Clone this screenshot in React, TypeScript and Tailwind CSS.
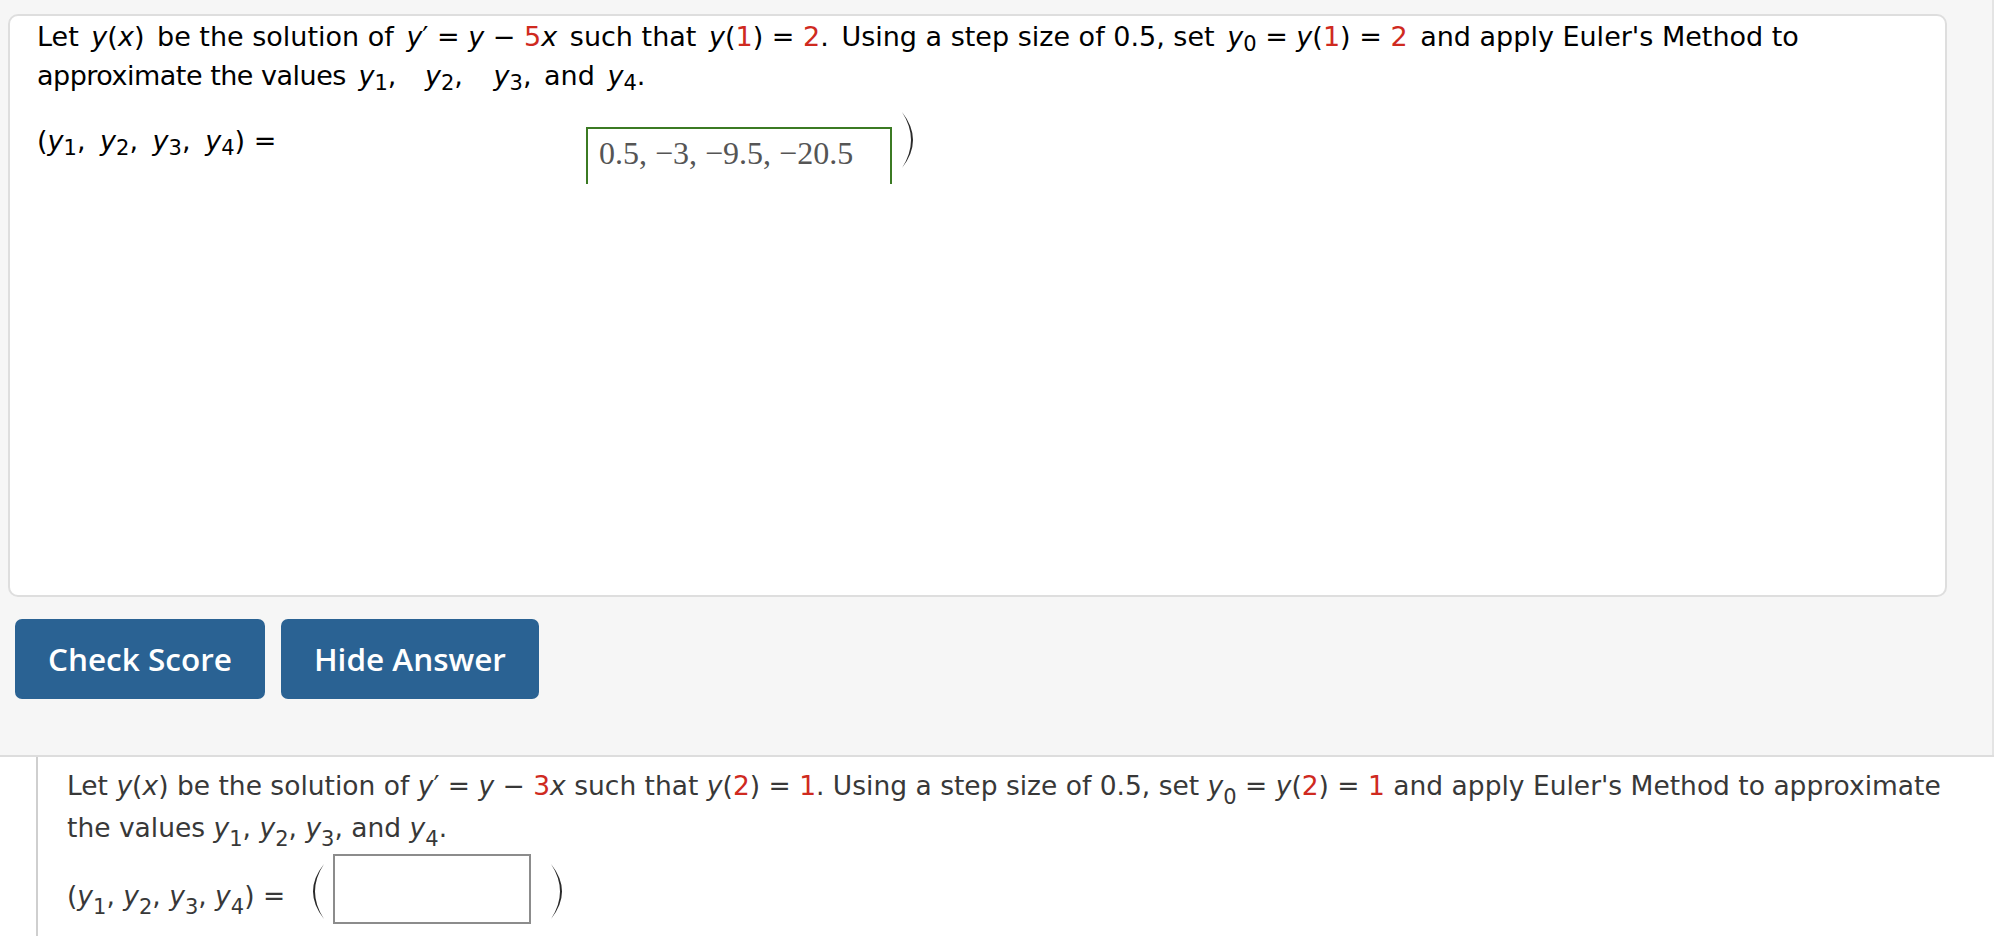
import React from "react";

type C = { children?: React.ReactNode; className?: string };

const R = ({ children }: C) => <span className="text-[#cf2a1f]">{children}</span>;
const I = ({ children }: C) => <i className="italic">{children}</i>;
const M = ({ children, className = "" }: C) => <span className={"mx-[4px] " + className}>{children}</span>;
const S = ({ children }: C) => (
  <span className="text-[21px] leading-none align-[-5px]">{children}</span>
);
const S2 = ({ children }: C) => (
  <span className="text-[21px] leading-none align-[-9px]">{children}</span>
);

const RParen = ({ h = 56 }: { h?: number }) => (
  <svg width="16" height={h} viewBox={`0 0 16 ${h}`} className="block">
    <path d={`M1 0 Q23 ${h / 2} 1 ${h} Q19 ${h / 2} 1 0 Z`} fill="#2a2a2a" />
  </svg>
);
const LParen = ({ h = 56 }: { h?: number }) => (
  <svg width="16" height={h} viewBox={`0 0 16 ${h}`} className="block">
    <path d={`M15 0 Q-7 ${h / 2} 15 ${h} Q-3 ${h / 2} 15 0 Z`} fill="#2a2a2a" />
  </svg>
);

export default function App() {
  return (
    <div className="w-[1994px] h-[936px] overflow-hidden bg-white font-['DejaVu_Sans',Verdana,sans-serif]">
      {/* top gray area */}
      <div className="h-[755px] bg-[#f6f6f6] border-r-2 border-[#e4e4e4] pt-[14px] pl-[8px] flex flex-col">
        <div className="w-[1939px] h-[583px] shrink-0 bg-white border-2 border-[#dedede] rounded-[10px] pl-[27px] pt-[1px] text-black text-[27px] leading-[39px]">
          <div className="whitespace-nowrap">
            Let
            {" "}
            <M>
              <I>y</I>(<I>x</I>)
            </M>
            {" "}be the solution of{" "}
            <M>
              <I>y</I>′ = <I>y</I> − <R>5</R>
              <I>x</I>
            </M>
            {" "}such that{" "}
            <M>
              <I>y</I>(<R>1</R>) = <R>2</R>.
            </M>
            {" "}Using a step size of 0.5, set{" "}
            <M>
              <I>y</I>
              <S>0</S> = <I>y</I>(<R>1</R>) = <R>2</R>
            </M>
            {" "}and apply Euler's Method to
          </div>
          <div className="whitespace-nowrap">
            <span className="tracking-[-0.5px]">approximate the values</span>{" "}
            <M className="mr-[16px]">
              <I>y</I>
              <S>1</S>,
            </M>
            {" "}
            <M className="mr-[18px]">
              <I>y</I>
              <S>2</S>,
            </M>
            {" "}
            <M>
              <I>y</I>
              <S>3</S>,
            </M>
            {" "}and{" "}
            <M>
              <I>y</I>
              <S>4</S>.
            </M>
          </div>
          <div className="flex items-start mt-[17px]">
            <div className="w-[549px] shrink-0 pt-[9px] leading-[39px] whitespace-nowrap">
              <span className="[word-spacing:6px]">
                (<I>y</I>
                <S>1</S>, <I>y</I>
                <S>2</S>, <I>y</I>
                <S>3</S>, <I>y</I>
                <S>4</S>)
              </span>{" "}
              =
            </div>
            <div className="mt-[15px] w-[306px] h-[57px] shrink-0 border-2 border-b-0 border-[#3b7a23] pl-[11px] pt-[7px] text-[32px] leading-[34px] text-[#555555] font-['Liberation_Serif',serif] whitespace-nowrap">
              0.5, −3, −9.5, −20.5
            </div>
            <div className="ml-[9px]">
              <RParen h={56} />
            </div>
          </div>
        </div>
        <div className="flex gap-[16px] mt-[22px] pl-[7px] font-['Open_Sans',sans-serif]">
          <button className="h-[80px] px-[33px] rounded-[7px] bg-[#2a6293] text-white text-[31.5px] font-semibold">
            Check Score
          </button>
          <button className="h-[80px] px-[33px] rounded-[7px] bg-[#2a6293] text-white text-[31.5px] font-semibold">
            Hide Answer
          </button>
        </div>
      </div>

      {/* lower panel */}
      <div className="h-[181px] border-t-2 border-[#dddddd] bg-white flex">
        <div className="w-[36px] shrink-0" />
        <div className="border-l-2 border-[#cfcfcf] pl-[29px] pt-[9px] text-[#383838] text-[26.5px] leading-[39px] flex-1">
          <div className="whitespace-nowrap">
            Let <I>y</I>(<I>x</I>) be the solution of <I>y</I>′ = <I>y</I> − <R>3</R>
            <I>x</I> such that <I>y</I>(<R>2</R>) = <R>1</R>. Using a step size of 0.5, set{" "}
            <I>y</I>
            <S2>0</S2> = <I>y</I>(<R>2</R>) = <R>1</R> and apply Euler's Method to approximate
          </div>
          <div className="whitespace-nowrap">
            the values <I>y</I>
            <S2>1</S2>, <I>y</I>
            <S2>2</S2>, <I>y</I>
            <S2>3</S2>, and <I>y</I>
            <S2>4</S2>.
          </div>
          <div className="flex items-start mt-[4px]">
            <div className="mt-[22px] w-[242px] shrink-0 whitespace-nowrap">
              (<I>y</I>
              <S2>1</S2>, <I>y</I>
              <S2>2</S2>, <I>y</I>
              <S2>3</S2>, <I>y</I>
              <S2>4</S2>) =
            </div>
            <div className="mt-[10px]">
              <LParen h={55} />
            </div>
            <div className="ml-[8px] w-[198px] h-[70px] shrink-0 border-2 border-[#8c8c8c] bg-white" />
            <div className="ml-[19px] mt-[10px]">
              <RParen h={55} />
            </div>
          </div>
        </div>
      </div>
    </div>
  );
}
